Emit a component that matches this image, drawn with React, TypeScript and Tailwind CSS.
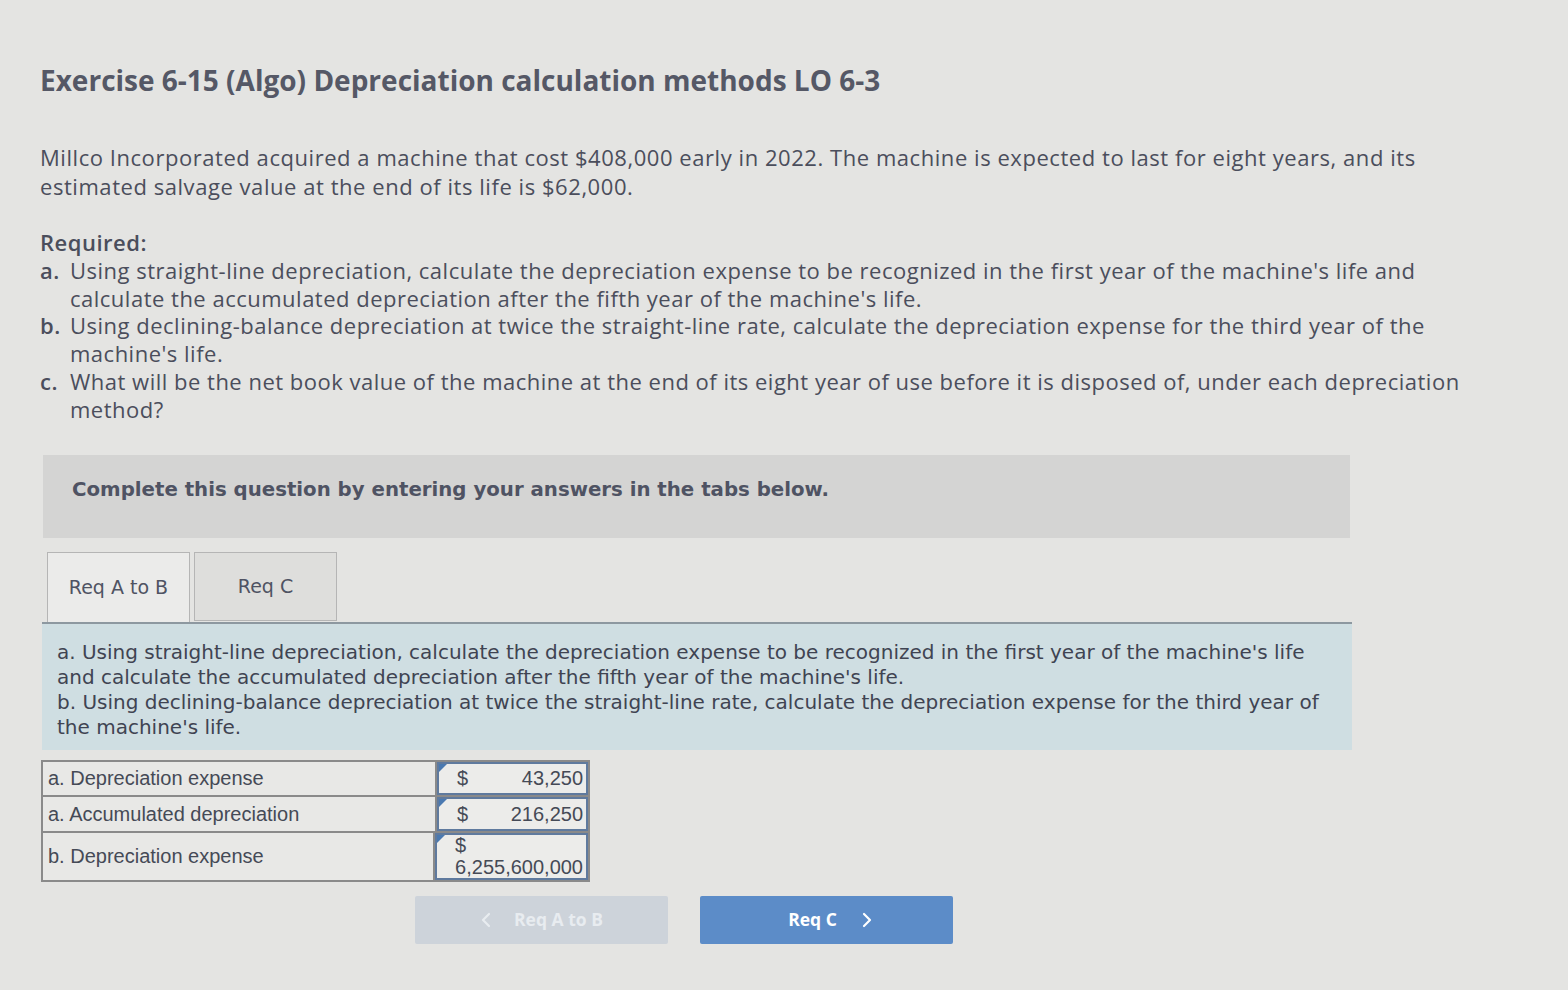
import React from "react";

export default function App() {
  const body = { fontFamily: '"Open Sans", "Lato", sans-serif' };
  const verd = { fontFamily: '"DejaVu Sans", Verdana, sans-serif' };
  const arial = { fontFamily: '"Liberation Sans", Arial, sans-serif' };
  const tri = (
    <span className="absolute left-0 top-0 w-0 h-0 border-t-[8px] border-t-[#4a79b0] border-r-[8px] border-r-transparent"></span>
  );
  return (
    <div className="w-[1568px] h-[990px] bg-[#e4e4e2] overflow-hidden text-[#4b4e5c]" style={body}>
      <div className="pl-[40px] pt-[62px]">
        <h1 className="text-[28px] font-bold leading-[36px] text-[#555866] whitespace-nowrap">
          Exercise 6-15 (Algo) Depreciation calculation methods LO 6-3
        </h1>
        <p className="mt-[45px] text-[22px] tracking-[0.55px] leading-[29px] whitespace-nowrap">
          Millco Incorporated acquired a machine that cost $408,000 early in 2022. The machine is expected to last for eight years, and its
          <br />
          estimated salvage value at the end of its life is $62,000.
        </p>
        <div className="mt-[28px] text-[22px] tracking-[0.5px] leading-[27.8px] whitespace-nowrap">
          <div className="font-semibold">Required:</div>
          <div className="flex">
            <span className="w-[30px] font-semibold">a.</span>
            <span>
              Using straight-line depreciation, calculate the depreciation expense to be recognized in the first year of the machine's life and
              <br />
              calculate the accumulated depreciation after the fifth year of the machine's life.
            </span>
          </div>
          <div className="flex">
            <span className="w-[30px] font-semibold">b.</span>
            <span>
              Using declining-balance depreciation at twice the straight-line rate, calculate the depreciation expense for the third year of the
              <br />
              machine's life.
            </span>
          </div>
          <div className="flex">
            <span className="w-[30px] font-semibold">c.</span>
            <span>
              What will be the net book value of the machine at the end of its eight year of use before it is disposed of, under each depreciation
              <br />
              method?
            </span>
          </div>
        </div>
      </div>

      <div className="ml-[43px] mt-[31px] w-[1307px] h-[83px] bg-[#d4d4d3] pl-[29px] pt-[23px]">
        <div className="text-[19.75px] leading-[23px] font-bold text-[#4f5363] whitespace-nowrap" style={verd}>
          Complete this question by entering your answers in the tabs below.
        </div>
      </div>

      <div className="ml-[42px] mt-[14px] w-[1310px]" style={verd}>
        <div className="flex gap-[4px] pl-[5px]">
          <div className="w-[143px] h-[70px] bg-[#ebebea] border border-[#b5b5b5] border-b-0 flex items-center justify-center text-[19px] text-[#4f5363]">
            Req A to B
          </div>
          <div className="w-[143px] h-[69px] bg-[#dededc] border border-[#b5b5b5] flex items-center justify-center text-[19px] text-[#4f5363]">
            Req C
          </div>
        </div>
        <div className="bg-[#cfdee2] border-t-2 border-[#8d98a0] h-[128px] pl-[15px] pt-[16px] text-[20px] leading-[25px] text-[#3f4452] whitespace-nowrap">
          <div>
            a. Using straight-line depreciation, calculate the depreciation expense to be recognized in the first year of the machine's life
            <br />
            and calculate the accumulated depreciation after the fifth year of the machine's life.
          </div>
          <div>
            b. Using declining-balance depreciation at twice the straight-line rate, calculate the depreciation expense for the third year of
            <br />
            the machine's life.
          </div>
        </div>
      </div>

      <div className="ml-[41px] mt-[10px] w-[549px] border-2 border-[#8a8a8a] text-[20px] text-[#454a56]" style={arial}>
        <div className="flex h-[35px] border-b-2 border-[#8a8a8a]">
          <div className="w-[394px] border-r-2 border-[#8a8a8a] pl-[5px] flex items-center bg-[#e8e8e6]">a. Depreciation expense</div>
          <div className="relative flex-1 flex items-center justify-between pl-[18px] pr-[3px] border-2 border-[#5f7a9e] bg-[#ececea]">
            {tri}
            <span>$</span>
            <span>43,250</span>
          </div>
        </div>
        <div className="flex h-[36px] border-b-2 border-[#8a8a8a]">
          <div className="w-[394px] border-r-2 border-[#8a8a8a] pl-[5px] flex items-center bg-[#e8e8e6]">a. Accumulated depreciation</div>
          <div className="relative flex-1 flex items-center justify-between pl-[18px] pr-[3px] border-2 border-[#5f7a9e] bg-[#ececea]">
            {tri}
            <span>$</span>
            <span>216,250</span>
          </div>
        </div>
        <div className="flex h-[47px]">
          <div className="w-[394px] border-r-2 border-[#8a8a8a] pl-[5px] flex items-center bg-[#e8e8e6]">b. Depreciation expense</div>
          <div className="relative flex-1 flex flex-col justify-center leading-[22px] pl-[18px] pr-[3px] border-2 border-[#5f7a9e] bg-[#ececea]">
            {tri}
            <span>$</span>
            <span className="text-right">6,255,600,000</span>
          </div>
        </div>
      </div>

      <div className="flex gap-[32px] ml-[415px] mt-[14px]" style={body}>
        <div className="w-[253px] h-[48px] rounded-[2px] bg-[#cdd3da] flex items-center justify-center gap-[22px] text-[#e8ecf0] font-bold text-[17.5px]">
          <svg width="12" height="16" viewBox="0 0 12 16" fill="none" stroke="currentColor" strokeWidth="2.2" strokeLinecap="round" strokeLinejoin="round">
            <path d="M9 2 3 8l6 6" />
          </svg>
          <span>Req A to B</span>
        </div>
        <div className="w-[253px] h-[48px] rounded-[2px] bg-[#5c8cc8] flex items-center justify-center gap-[24px] text-white font-bold text-[17.5px] pl-[8px]">
          <span>Req C</span>
          <svg width="12" height="16" viewBox="0 0 12 16" fill="none" stroke="currentColor" strokeWidth="2.2" strokeLinecap="round" strokeLinejoin="round">
            <path d="M3 2l6 6-6 6" />
          </svg>
        </div>
      </div>
    </div>
  );
}
